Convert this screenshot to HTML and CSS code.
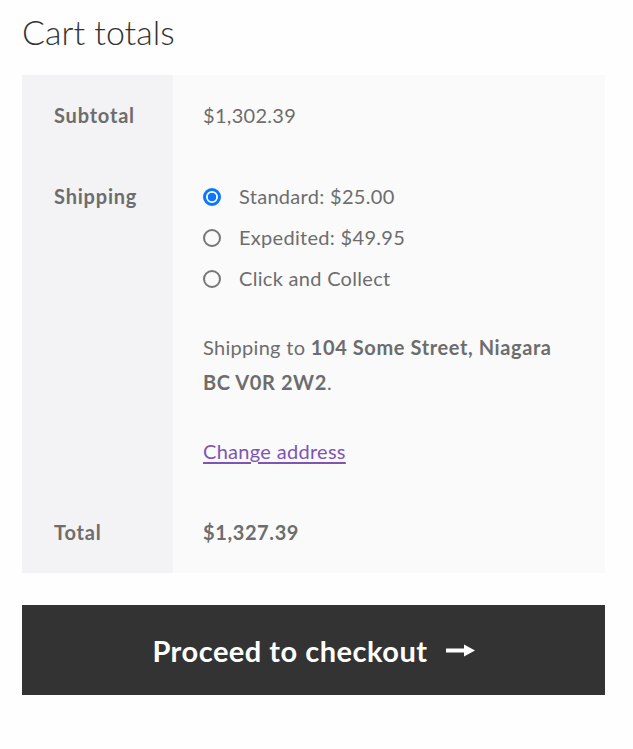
FILE: index.html
```html
<!DOCTYPE html>
<html lang="en">
<head>
<meta charset="utf-8">
<title>Cart totals</title>
<link rel="stylesheet" href="styles.css">
</head>
<body>
<div class="cart">
  <h2 class="title">Cart totals</h2>
  <table class="totals">
    <tr>
      <th>Subtotal</th>
      <td>$1,302.39</td>
    </tr>
    <tr>
      <th>Shipping</th>
      <td>
        <ul class="methods">
          <li><span class="radio checked"></span>Standard: $25.00</li>
          <li><span class="radio"></span>Expedited: $49.95</li>
          <li><span class="radio"></span>Click and Collect</li>
        </ul>
        <p class="dest">Shipping to <strong>104 Some Street, Niagara</strong> <strong>BC V0R 2W2</strong>.</p>
        <a class="change" href="#">Change address</a>
      </td>
    </tr>
    <tr>
      <th>Total</th>
      <td><strong>$1,327.39</strong></td>
    </tr>
  </table>
  <a class="checkout" href="#">Proceed to checkout <svg class="arrow" width="29" height="13" viewBox="0 0 29 13" aria-hidden="true"><path d="M0 4.5h20v4H0z" fill="#fff"/><path d="M18 0.5l11 6-11 6z" fill="#fff"/></svg></a>
</div>
</body>
</html>
```

FILE: styles.css
```css
* { box-sizing: border-box; }
body {
  margin: 0;
  background: #fefefe;
  font-family: "Lato", "Open Sans", sans-serif;
  color: #6d6d6d;
  font-size: 20px;
  letter-spacing: 0.3px;
}
.cart {
  width: 583px;
  margin-left: 22px;
}
.title {
  margin: 0;
  padding-top: 10px;
  font-weight: 300;
  font-size: 34px;
  line-height: 44px;
  color: #333;
  letter-spacing: 0;
  height: 75px;
}
.totals {
  width: 100%;
  border-collapse: collapse;
  background: #fafafa;
}
.totals th, .totals td {
  padding: 23px 30px;
  line-height: 35px;
  vertical-align: top;
  text-align: left;
}
.totals th {
  width: 151px;
  background: #f3f2f4;
  font-weight: 700;
  padding-left: 32px;
  letter-spacing: 0.8px;
}
.totals strong { font-weight: 700; letter-spacing: 0.6px; }
.methods {
  list-style: none;
  margin: 0;
  padding: 0;
}
.methods li {
  display: flex;
  align-items: center;
  margin-bottom: 6px;
}
.methods li:last-child { margin-bottom: 0; }
.radio {
  width: 18px;
  height: 18px;
  border: 2px solid #767676;
  border-radius: 50%;
  margin: 0 18px 0 0;
  flex: none;
}
.radio.checked {
  border: 3px solid #0b76ff;
  background: radial-gradient(circle, #0b76ff 0 4px, #fff 4.6px);
}
.dest {
  margin: 34px 0 34px;
}
.change {
  color: #7f54b3;
  text-decoration: underline;
  text-underline-offset: 3px;
}
.checkout {
  display: flex;
  justify-content: center;
  align-items: center;
  gap: 18px;
  margin-top: 32px;
  height: 90px;
  background: #333;
  color: #fff;
  font-weight: 700;
  font-size: 29px;
  letter-spacing: 0.5px;
  text-decoration: none;
}
.arrow { flex: none; }
```
